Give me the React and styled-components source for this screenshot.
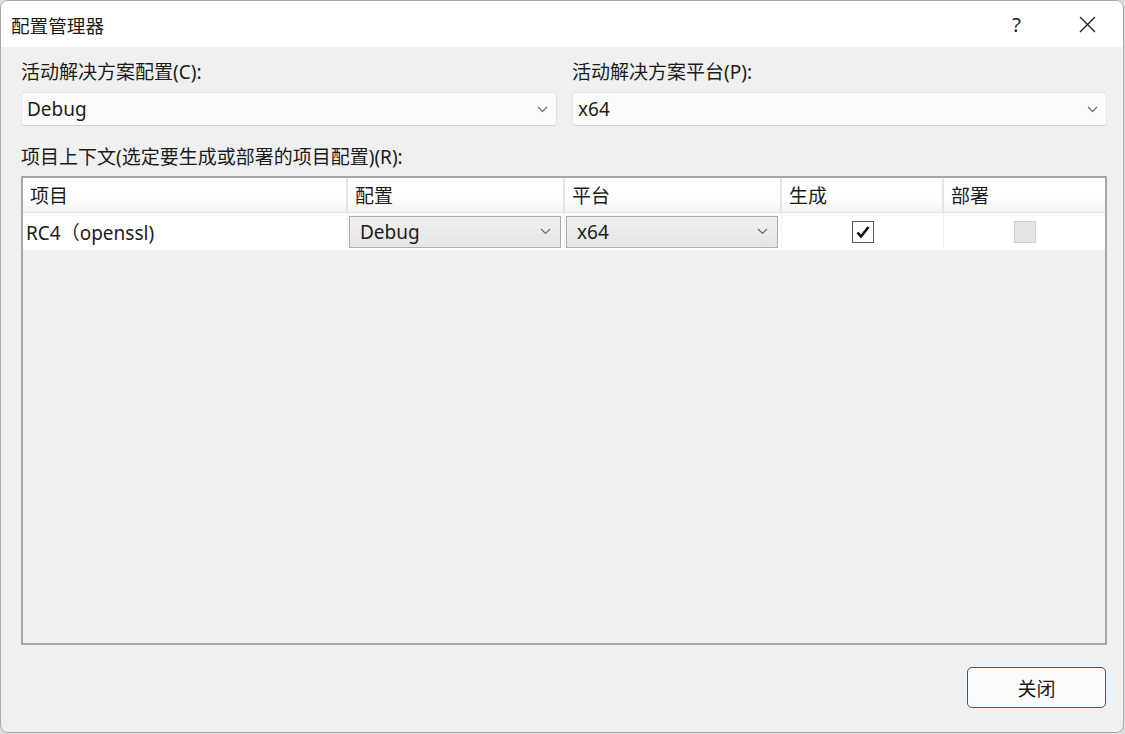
import styled, { createGlobalStyle } from "styled-components";

const GlobalStyle = createGlobalStyle`
  html, body {
    margin: 0;
    padding: 0;
    background: #dcdcdc;
  }
  body {
    font-family: "Noto Sans", "Noto Sans CJK SC", sans-serif;
    color: #1b1b1b;
  }
`;

const Chevron = () => (
  <svg width="11" height="7" viewBox="0 0 11 7">
    <path d="M1 1 L5.5 5.5 L10 1" fill="none" stroke="#6a6a6a" strokeWidth="1.2" />
  </svg>
);

const CloseIcon = () => (
  <svg width="17" height="17" viewBox="0 0 17 17">
    <path d="M1 1 L16 16 M16 1 L1 16" stroke="#1b1b1b" strokeWidth="1.3" />
  </svg>
);

const columns = [
  { title: "项目" },
  { title: "配置" },
  { title: "平台" },
  { title: "生成" },
  { title: "部署" },
];

export default function App() {
  return (
    <>
      <GlobalStyle />
      <Window>
        <TitleBar>
          <Title>配置管理器</Title>
          <TitleButton>?</TitleButton>
          <TitleButton>
            <CloseIcon />
          </TitleButton>
        </TitleBar>
        <Body>
          <TopGrid>
            <Field>
              <Label>活动解决方案配置(C):</Label>
              <Combo>
                <span>Debug</span>
                <Chevron />
              </Combo>
            </Field>
            <Field>
              <Label>活动解决方案平台(P):</Label>
              <Combo>
                <span>x64</span>
                <Chevron />
              </Combo>
            </Field>
          </TopGrid>
          <SectionLabel>项目上下文(选定要生成或部署的项目配置)(R):</SectionLabel>
          <Table>
            <Row $header>
              {columns.map((c) => (
                <HeaderCell key={c.title}>{c.title}</HeaderCell>
              ))}
            </Row>
            <Row>
              <Cell>RC4（openssl)</Cell>
              <Cell>
                <CellSelect>
                  <span>Debug</span>
                  <Chevron />
                </CellSelect>
              </Cell>
              <Cell>
                <CellSelect>
                  <span>x64</span>
                  <Chevron />
                </CellSelect>
              </Cell>
              <Cell $center>
                <CheckBox>
                  <svg width="16" height="16" viewBox="0 0 16 16">
                    <path d="M2.5 8.5 L6 12.5 L13.5 3" fill="none" stroke="#111" strokeWidth="2.6" />
                  </svg>
                </CheckBox>
              </Cell>
              <Cell $center>
                <CheckBox $disabled />
              </Cell>
            </Row>
          </Table>
          <Footer>
            <Button>关闭</Button>
          </Footer>
        </Body>
      </Window>
    </>
  );
}

const Window = styled.div`
  box-sizing: border-box;
  width: 1124px;
  height: 733px;
  border: 1px solid #a9a9a9;
  border-radius: 8px;
  overflow: hidden;
  background: #f0f0f0;
  display: flex;
  flex-direction: column;
`;

const TitleBar = styled.div`
  height: 46px;
  flex: none;
  background: #ffffff;
  display: flex;
  align-items: center;
  padding-left: 10px;
`;

const Title = styled.div`
  flex: 1;
  font-size: 18.6px;
  font-family: "Noto Sans CJK SC", sans-serif;
  color: #1b1b1b;
`;

const TitleButton = styled.div`
  width: 71px;
  height: 46px;
  display: flex;
  align-items: center;
  justify-content: center;
  font-size: 20px;
  color: #1b1b1b;
`;

const Body = styled.div`
  flex: 1;
  display: flex;
  flex-direction: column;
  padding: 13px 16px 0 20px;
`;

const TopGrid = styled.div`
  display: grid;
  grid-template-columns: 536px 1fr;
  gap: 15px;
`;

const Field = styled.div`
  display: flex;
  flex-direction: column;
  gap: 7px;
`;

const Label = styled.div`
  font-size: 19px;
  line-height: 25px;
`;

const Combo = styled.div`
  box-sizing: border-box;
  height: 34px;
  display: flex;
  align-items: center;
  justify-content: space-between;
  padding: 0 8px 0 5px;
  background: #fbfbfb;
  border: 1px solid #e3e3e3;
  border-bottom-color: #d2d2d2;
  border-radius: 4px;
  font-size: 19px;
`;

const SectionLabel = styled.div`
  margin-top: 19px;
  font-size: 19px;
  line-height: 25px;
`;

const Table = styled.div`
  margin-top: 6px;
  height: 469px;
  box-sizing: border-box;
  border: 2px solid #a6a6a6;
  background: #f0f0f0;
`;

const Row = styled.div`
  display: grid;
  grid-template-columns: 325px 217px 217px 162px 1fr;
  height: ${(p) => (p.$header ? "35px" : "37px")};
  background: #ffffff;
`;

const HeaderCell = styled.div`
  display: flex;
  align-items: center;
  padding-left: 7px;
  font-size: 19px;
  background: linear-gradient(#ffffff 55%, #f3f3f3);
  border-right: 2px solid #e6e6e6;
  border-bottom: 1px solid #e4e4e4;
  &:last-child {
    border-right: none;
  }
`;

const Cell = styled.div`
  display: flex;
  align-items: center;
  justify-content: ${(p) => (p.$center ? "center" : "flex-start")};
  padding-left: ${(p) => (p.$center ? "0" : "3px")};
  font-size: 19px;
  border-right: 1px solid #f2f2f2;
  &:last-child {
    border-right: none;
  }
`;

const CellSelect = styled.div`
  box-sizing: border-box;
  width: 212px;
  height: 32px;
  margin-left: -2px;
  display: flex;
  align-items: center;
  justify-content: space-between;
  padding: 0 9px 0 10px;
  background: linear-gradient(#f0f0f0, #e5e5e5);
  border: 1px solid #acacac;
  font-size: 19px;
`;

const CheckBox = styled.div`
  box-sizing: border-box;
  width: 22px;
  height: 22px;
  display: flex;
  align-items: center;
  justify-content: center;
  background: ${(p) => (p.$disabled ? "#e6e6e6" : "#ffffff")};
  border: 1px solid ${(p) => (p.$disabled ? "#cccccc" : "#555555")};
`;

const Footer = styled.div`
  display: flex;
  justify-content: flex-end;
  margin-top: 22px;
`;

const Button = styled.div`
  box-sizing: border-box;
  width: 139px;
  height: 41px;
  margin-right: 1px;
  display: flex;
  align-items: center;
  justify-content: center;
  background: #fbfbfb;
  border: 1px solid #0067c0;
  border-radius: 5px;
  font-size: 19px;
  font-family: "Noto Sans CJK SC", sans-serif;
`;
